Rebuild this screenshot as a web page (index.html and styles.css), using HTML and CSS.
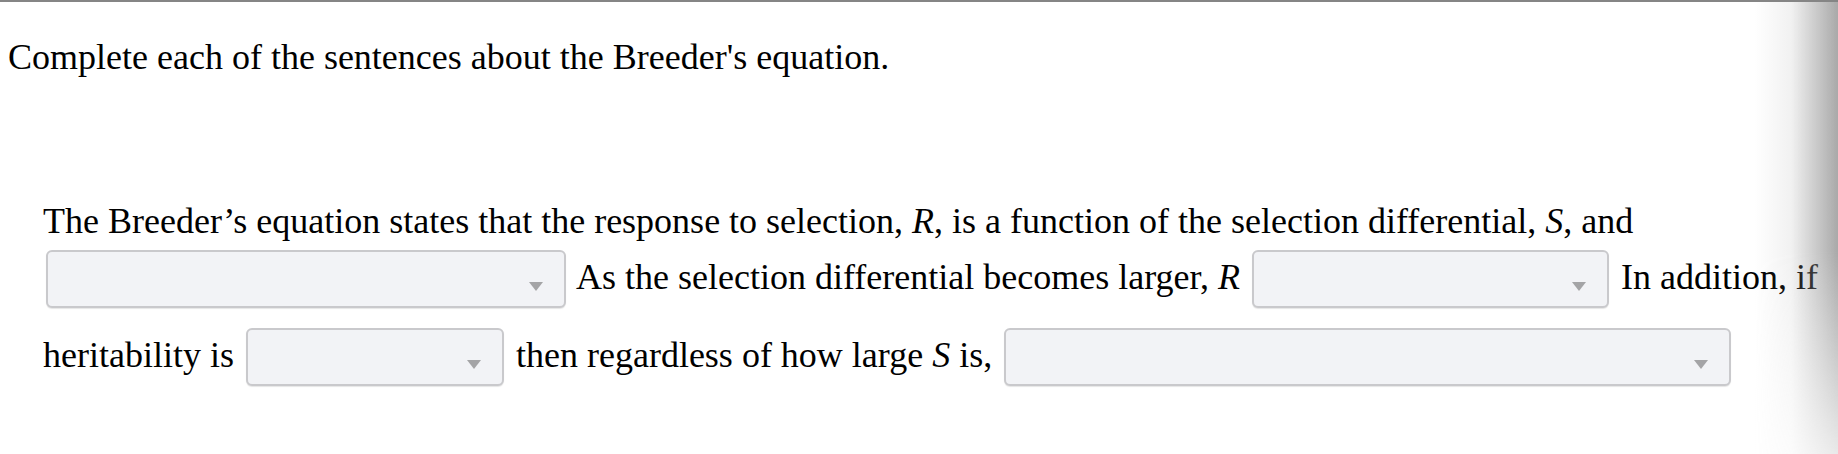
FILE: index.html
```html
<!DOCTYPE html>
<html lang="en">
<head>
<meta charset="utf-8">
<title>Breeder's equation</title>
<link rel="stylesheet" href="styles.css">
</head>
<body>
<div class="page">
  <div class="prompt">Complete each of the sentences about the Breeder's equation.</div>
  <p class="question">The Breeder’s equation states that the response to selection, <i>R</i>, is a function of the selection differential, <i>S</i>, and <span class="dd dd-1"></span> As the selection differential becomes larger, <i>R</i> <span class="dd dd-2"></span> In addition, if heritability is <span class="dd dd-3"></span> then regardless of how large <i>S</i> is, <span class="dd dd-4"></span></p>
  <div class="edge-shadow"></div>
</div>
</body>
</html>
```

FILE: styles.css
```css
html, body {
  margin: 0;
  padding: 0;
  background: #ffffff;
}

body {
  width: 1838px;
  height: 454px;
  overflow: hidden;
  font-family: "Liberation Serif", "Times New Roman", serif;
  color: #000;
}

.page {
  position: relative;
  height: 454px;
  border-top: 2px solid #858585;
  box-sizing: border-box;
}

.prompt {
  font-size: 36px;
  line-height: 41px;
  padding: 35px 0 0 8px;
}

.question {
  font-size: 36px;
  line-height: 41px;
  margin: 123px 0 0 0;
  padding: 0 20px 0 43px;
}

.dd {
  position: relative;
  display: inline-block;
  height: 58px;
  box-sizing: border-box;
  vertical-align: middle;
  margin: 8px 3px 12px;
  background: #f2f3f6;
  border: 2px solid #c9c9cc;
  border-radius: 6px;
  box-shadow: 0 1px 1px rgba(0, 0, 0, 0.1);
}

.dd::after {
  content: "";
  position: absolute;
  right: 21px;
  top: 30px;
  width: 0;
  height: 0;
  border-left: 7px solid transparent;
  border-right: 7px solid transparent;
  border-top: 9px solid #a4a4a6;
}

.dd-1 { width: 520px; }
.dd-2 { width: 357px; }
.dd-3 { width: 258px; }
.dd-4 { width: 727px; }

.edge-shadow {
  position: absolute;
  top: 0;
  right: 0;
  width: 85px;
  height: 454px;
  background: linear-gradient(to right, rgba(160,160,160,0) 0%, rgba(160,160,160,0.15) 45%, rgba(140,140,140,0.75) 100%);
  -webkit-mask-image: linear-gradient(to bottom, #000 0%, #000 55%, rgba(0,0,0,0.25) 100%);
  mask-image: linear-gradient(to bottom, #000 0%, #000 55%, rgba(0,0,0,0.25) 100%);
  pointer-events: none;
}
```
